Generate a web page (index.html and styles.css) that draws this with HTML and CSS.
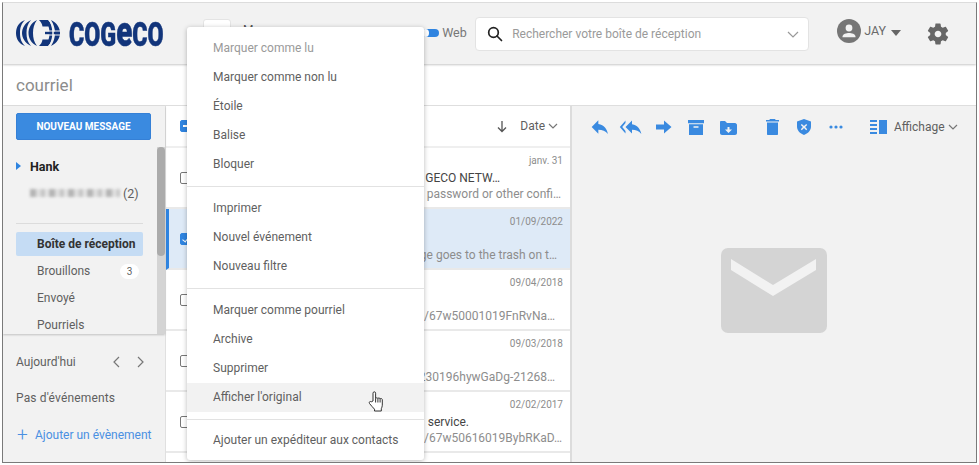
FILE: index.html
```html
<!DOCTYPE html>
<html lang="fr">
<head>
<meta charset="utf-8">
<title>Cogeco courriel</title>
<link rel="stylesheet" href="styles.css">
</head>
<body>
<div class="frame">
  <header class="topbar">
    <div class="logo">
      <svg class="logo-mark" viewBox="0 0 44 26" width="44" height="26">
        <path d="M9 0C3 2 0 7 0 13s3 11 9 13C5 22 4 18 4 13S5 4 9 0Z"/>
        <path d="M15 0C9 3 6 8 6 13s3 10 9 13c-3.500-4-4.500-8-4.500-13S11.500 4 15 0Z"/>
        <path d="M21 0c-6 3-8.500 8-8.500 13S15 23 21 26c-3-4-4-8-4-13S18 4 21 0Z"/>
        <path d="M23 0h9c3 3 5 8 5 13s-2 10-5 13h-9c2-2 3-3.500 3.500-6.500h6c.7-2 1-4 1-6.500s-.3-4.500-1-6.500h-6C26 3.500 25 2 23 0Z"/>
        <path d="M35 0c6 3 9 8 9 13s-3 10-9 13c2.500-4 4-8 4-13s-1.500-9-4-13Z"/>
        <path d="M29 11.600h15v2.800H29z"/>
        <path class="logo-slit" d="M29 10.400h15v1.200H29zM29 14.400h15v1.200H29zM32.500 0H34c2.500 3 3.800 8 3.800 13s-1.300 10-3.800 13h-1.500c2.500-3 3.800-8 3.800-13s-1.300-10-3.800-13Z"/>
      </svg>
      <span class="logo-text">COG<span class="logo-e">e</span>CO</span>
    </div>
    <div class="app-stub"></div>
    <span class="app-label">M</span>
    <div class="top-right">
      <span class="toggle"></span>
      <span class="web-label">Web</span>
      <div class="search">
        <svg class="search-icon" viewBox="0 0 16 16" width="16" height="16"><circle cx="6.500" cy="6.500" r="4.800"/><path d="M10 10l4.500 4.500"/></svg>
        <span class="search-text">Rechercher votre boîte de réception</span>
        <svg class="chev chev-search" viewBox="0 0 12 7" width="12" height="7"><path d="M1 1l5 5 5-5"/></svg>
      </div>
      <div class="avatar">
        <svg viewBox="0 0 24 24" width="24" height="24"><circle cx="12" cy="9" r="3.400"/><path d="M5.500 17.500c0-2.500 4-3.600 6.500-3.600s6.500 1.100 6.500 3.600v.7h-13z"/></svg>
      </div>
      <span class="user-name">JAY</span>
      <span class="caret"></span>
      <svg class="gear" viewBox="0 0 24 24" width="26" height="26"><path d="M19.140 12.940c.04-.3.06-.61.06-.94 0-.32-.02-.64-.07-.94l2.030-1.580a.49.49 0 0 0 .12-.61l-1.920-3.320a.488.488 0 0 0-.59-.22l-2.390.96c-.5-.38-1.030-.7-1.620-.94l-.36-2.540a.484.484 0 0 0-.48-.41h-3.840c-.24 0-.43.17-.47.41l-.36 2.540c-.59.24-1.130.57-1.620.94l-2.390-.96c-.22-.08-.47 0-.59.22L2.740 8.870c-.12.21-.08.47.12.61l2.030 1.580c-.05.3-.09.63-.09.94s.02.64.07.94l-2.030 1.580a.49.49 0 0 0-.12.61l1.920 3.320c.12.22.37.29.59.22l2.390-.96c.5.38 1.030.7 1.620.94l.36 2.540c.05.24.24.41.48.41h3.840c.24 0 .44-.17.47-.41l.36-2.540c.59-.24 1.130-.56 1.620-.94l2.390.96c.22.08.47 0 .59-.22l1.920-3.320c.12-.22.07-.47-.12-.61l-2.010-1.580zM12 15.100c-1.700 0-3.100-1.400-3.100-3.100s1.400-3.100 3.100-3.100 3.100 1.400 3.100 3.100-1.400 3.100-3.100 3.100z"/></svg>
    </div>
  </header>

  <div class="subbar">courriel</div>

  <div class="main">
    <aside class="sidebar">
      <div class="side-top">
        <button class="compose">NOUVEAU MESSAGE</button>
        <div class="account"><span class="tri"></span><span>Hank</span></div>
        <div class="address"><span class="blurred"></span><span>(2)</span></div>
        <div class="side-rule"></div>
        <nav class="folders">
          <div class="folder folder-active">Boîte de réception</div>
          <div class="folder">Brouillons<span class="pill">3</span></div>
          <div class="folder">Envoyé</div>
          <div class="folder">Pourriels</div>
        </nav>
        <div class="scroll-track"><div class="scroll-thumb"></div></div>
      </div>
      <div class="side-bottom">
        <div class="cal-head">
          <span class="cal-today">Aujourd'hui</span>
          <svg class="chev cal-prev" viewBox="0 0 7 12" width="7" height="12"><path d="M6 1L1 6l5 5"/></svg>
          <svg class="chev cal-next" viewBox="0 0 7 12" width="7" height="12"><path d="M1 1l5 5-5 5"/></svg>
        </div>
        <div class="cal-empty">Pas d'événements</div>
        <div class="cal-add"><span class="plus">+</span>Ajouter un évènement</div>
      </div>
    </aside>

    <section class="list">
      <div class="list-head">
        <span class="check check-on check-dash"></span>
        <svg class="sort-arrow" viewBox="0 0 12 13" width="12" height="13"><path d="M6 1v10M2 7.500l4 4 4-4"/></svg>
        <span class="sort-label">Date</span>
        <svg class="chev chev-date" viewBox="0 0 10 6" width="10" height="6"><path d="M1 1l4 4 4-4"/></svg>
      </div>
      <div class="row">
        <span class="check"></span>
        <div class="row-body">
          <div class="r-date">janv. 31</div>
          <div class="r-subj subj-a">GECO NETW…</div>
          <div class="r-prev prev-a">password or other confi…</div>
        </div>
      </div>
      <div class="row row-selected">
        <span class="check check-on check-tick"></span>
        <div class="row-body">
          <div class="r-date">01/09/2022</div>
          <div class="r-subj">&nbsp;</div>
          <div class="r-prev prev-b">ge goes to the trash on t…</div>
        </div>
      </div>
      <div class="row">
        <span class="check"></span>
        <div class="row-body">
          <div class="r-date">09/04/2018</div>
          <div class="r-subj">&nbsp;</div>
          <div class="r-prev prev-c">/67w50001019FnRvNa…</div>
        </div>
      </div>
      <div class="row">
        <span class="check"></span>
        <div class="row-body">
          <div class="r-date">09/03/2018</div>
          <div class="r-subj">&nbsp;</div>
          <div class="r-prev prev-c">230196hywGaDg-21268…</div>
        </div>
      </div>
      <div class="row">
        <span class="check"></span>
        <div class="row-body">
          <div class="r-date">02/02/2017</div>
          <div class="r-subj subj-e">service.</div>
          <div class="r-prev prev-e">/67w50616019BybRKaD…</div>
        </div>
      </div>
    </section>

    <section class="pane">
      <div class="pane-tools">
        <span class="tool"><svg viewBox="0 0 24 24" width="20" height="20"><path d="M10 8.500V4l-8 8 8 8v-4.600c5 0 8.500 1.600 11.500 5.100C20.500 15 17 9.500 10 8.500z"/></svg></span>
        <span class="tool"><svg viewBox="0 0 32 24" width="26" height="20"><path d="M8 7V4L1 12l7 8v-3l-4-5zM16 8.500V4l-8 8 8 8v-4.600c5 0 8.500 1.600 11.500 5.100C26.500 15 23 9.500 16 8.500z"/></svg></span>
        <span class="tool"><svg viewBox="0 0 16 14" width="16" height="14"><path d="M0 4.500h8V0.500L15.500 7 8 13.500v-4H0z"/></svg></span>
        <span class="tool"><svg viewBox="0 0 16 15" width="16" height="15"><path d="M0 0h16v3.300H0zM1 4.300h14V15H1zM5.500 6.300v1.500h5V6.300z" fill-rule="evenodd"/></svg></span>
        <span class="tool"><svg viewBox="0 0 17 15" width="17" height="15"><path d="M1 1h4l2 2h8c1 0 2 1 2 2v8c0 1-1 2-2 2H2c-1 0-2-1-2-2V2c0-.5.500-1 1-1zM7.500 7v2.500H5l3.500 3.500L12 9.500H9.500V7z" fill-rule="evenodd"/></svg></span>
        <span class="tool tool-gap"><svg viewBox="0 0 13 16" width="13" height="16"><path d="M4 0h5l.7 1H13v1.500H0V1h3.300zM1 3.500h11V15c0 .6-.4 1-1 1H2c-.6 0-1-.4-1-1z"/></svg></span>
        <span class="tool"><svg viewBox="0 0 14 16" width="14" height="16"><path d="M7 0l7 2.500v5c0 4-3 7-7 8.500-4-1.500-7-4.500-7-8.500v-5zM4.800 5L7 7.100 9.200 5l1 1L8.100 8.100l2.100 2.100-1 1L7 9.100l-2.200 2.100-1-1 2.100-2.100L3.800 6z" fill-rule="evenodd"/></svg></span>
        <span class="tool"><svg viewBox="0 0 14 4" width="14" height="4"><circle cx="2" cy="2" r="1.600"/><circle cx="7" cy="2" r="1.600"/><circle cx="12" cy="2" r="1.600"/></svg></span>
        <span class="view-icon"><svg viewBox="0 0 17 14" width="17" height="14"><path d="M0 0h7v2H0zM0 4h7v2H0zM0 8h7v2H0zM0 12h7v2H0zM9 0h8v14H9z"/></svg></span>
        <span class="view-label">Affichage</span>
        <svg class="chev chev-view" viewBox="0 0 10 6" width="10" height="6"><path d="M1 1l4 4 4-4"/></svg>
      </div>
      <div class="pane-empty">
        <div class="envelope">
          <svg viewBox="0 0 106 85" width="106" height="85"><path d="M10 11l42 26 43-26v11L52 48 10 22z"/></svg>
        </div>
      </div>
    </section>
  </div>

  <div class="menu">
    <div class="m-item m-disabled">Marquer comme lu</div>
    <div class="m-item">Marquer comme non lu</div>
    <div class="m-item">Étoile</div>
    <div class="m-item">Balise</div>
    <div class="m-item">Bloquer</div>
    <div class="m-sep"></div>
    <div class="m-item">Imprimer</div>
    <div class="m-item">Nouvel événement</div>
    <div class="m-item">Nouveau filtre</div>
    <div class="m-sep"></div>
    <div class="m-item">Marquer comme pourriel</div>
    <div class="m-item">Archive</div>
    <div class="m-item">Supprimer</div>
    <div class="m-item m-hover">Afficher l'original
      <svg class="hand" viewBox="0 0 16 21" width="16" height="21"><path d="M5 10V2.200C5 1.300 5.600.8 6.300.8s1.300.5 1.300 1.400V7.500c0-.9 2.300-.9 2.300.2 0-1 2.200-.9 2.200.3 0-.8 2.200-.7 2.200.7v5.500c0 1.500-.6 2.500-1 3.500v2.300H6.500v-1.800C5 16.500 3 14.500 1.500 12.500c-.8-1.200.4-2.700 1.800-1.700z"/><path d="M7.600 7.500v4M9.900 7.700v3.800M12.100 8v3.500"/></svg>
    </div>
    <div class="m-sep m-sep-last"></div>
    <div class="m-item">Ajouter un expéditeur aux contacts</div>
  </div>
</div>
</body>
</html>
```

FILE: styles.css
```css
* { box-sizing: border-box; }
html, body { margin: 0; padding: 0; background: #fff; }
body { font-family: Roboto, "Liberation Sans", sans-serif; font-size: 12px; color: #5f5f5f; }

.frame {
  position: relative;
  display: flex;
  flex-direction: column;
  width: 975px;
  height: 461px;
  margin: 2px 0 0 2px;
  border: 1px solid #7a7a7a;
  border-top-color: #dcdcdc;
  overflow: hidden;
  background: #f2f2f2;
}

/* top bar */
.topbar {
  display: flex;
  flex: none;
  height: 61px;
  background: #f2f2f2;
  box-shadow: 0 1px 2px rgba(0,0,0,.22);
  position: relative;
  z-index: 1;
}
.logo { display: flex; flex: none; align-items: center; width: 147px; height: 26px; margin: 17px 0 0 13px; }
.logo-mark { flex: none; fill: #12357b; }
.logo-slit { fill: #f2f2f2; }
.logo-text {
  display: inline-block;
  margin-left: 9px;
  font-weight: 900;
  font-size: 33px;
  line-height: 26px;
  white-space: nowrap;
  color: #12357b;
  -webkit-text-stroke: .5px #12357b;
  transform: scaleX(.705);
  transform-origin: left center;
}
.logo-e { font-size: 42px; line-height: 26px; }
.app-stub { width: 28px; height: 24px; margin: 16px 0 0 40px; background: #fff; border: 1px solid #e4e4e4; border-radius: 3px; }
.app-label { margin: 20px 0 0 12px; font-size: 12px; line-height: 15px; color: #555; }
.top-right { display: flex; margin-left: auto; padding-right: 25px; }
.toggle { position: relative; width: 17px; height: 8px; margin-top: 26px; background: #2f84e0; border-radius: 4px; }
.toggle::before { content: ""; position: absolute; left: 0; top: 0; width: 7px; height: 8px; background: #fff; border-radius: 50%; }
.web-label { width: 26px; margin: 22px 0 0 3px; font-size: 12.5px; line-height: 15px; color: #777; }
.search {
  display: flex;
  align-items: center;
  width: 334px;
  height: 34px;
  margin: 14px 0 0 7px;
  padding: 0 9px 0 11px;
  background: #fff;
  border: 1px solid #e3e3e3;
  border-radius: 4px;
}
.search-icon { flex: none; fill: none; stroke: #222; stroke-width: 1.700; stroke-linecap: round; }
.search-text { margin-left: 9px; font-size: 12px; color: #9a9a9a; }
.chev { fill: none; stroke: #777; stroke-width: 1.200; flex: none; }
.chev-search { margin-left: auto; stroke: #999; }
.avatar { width: 24px; height: 24px; margin: 16px 0 0 28px; border-radius: 50%; background: #767676; }
.avatar svg { display: block; fill: #f2f2f2; }
.user-name { margin: 20px 0 0 3px; font-size: 12.5px; line-height: 15px; color: #6a6a6a; }
.caret { width: 0; height: 0; margin: 27px 0 0 5px; border: 5px solid transparent; border-top: 6px solid #666; border-bottom: 0; }
.gear { margin: 18px 0 0 24px; fill: #666; flex: none; }

/* sub bar */
.subbar {
  flex: none;
  height: 42px;
  padding: 10px 0 0 13px;
  background: #fff;
  border-bottom: 1px solid #dedede;
  font-size: 17px;
  line-height: 22px;
  color: #8c8c8c;
}

/* main columns */
.main { display: flex; flex: 1; min-height: 0; }
.sidebar { display: flex; flex-direction: column; flex: none; width: 163px; border-right: 1px solid #e0e0e0; background: #f2f2f2; }
.side-top { position: relative; flex: none; height: 228px; padding: 7px 0 0 13px; overflow: hidden; box-shadow: 0 1px 2px rgba(0,0,0,.2); }
.compose {
  display: block;
  width: 135px;
  height: 27px;
  padding: 0;
  background: #3a8ae0;
  border: 1px solid #3580d6;
  border-radius: 2px;
  color: #fff;
  font: 700 10px/1 Roboto, sans-serif;
}
.account { display: flex; align-items: center; height: 20px; margin-top: 16px; font-weight: 700; font-size: 12.5px; color: #222; }
.tri { width: 0; height: 0; margin-right: 9px; border-left: 5px solid #2f84e0; border-top: 4.500px solid transparent; border-bottom: 4.500px solid transparent; }
.address { display: flex; align-items: center; height: 20px; margin: 7px 0 0 14px; font-size: 12.5px; }
.blurred {
  width: 90px;
  height: 8px;
  margin-right: 3px;
  background: repeating-linear-gradient(90deg, #b4b4b4 0 6px, #dedede 6px 11px, #c4c4c4 11px 15px, #e6e6e6 15px 19px);
  filter: blur(1.500px);
}
.side-rule { width: 127px; height: 1px; margin-top: 20px; background: #dcdcdc; }
.folders { margin-top: 8px; }
.folder { display: flex; align-items: center; width: 127px; height: 24px; margin-bottom: 3px; padding: 0 4px 0 21px; border-radius: 2px; font-size: 12px; }
.folder-active { background: #c5dcf4; font-weight: 700; color: #333; white-space: nowrap; }
.pill { width: 19px; height: 15px; margin-left: auto; background: #fff; border-radius: 8px; font-size: 10px; line-height: 15px; text-align: center; }
.scroll-track { position: absolute; right: 0; top: 41px; bottom: 0; width: 8px; background: #d4d4d4; }
.scroll-thumb { height: 109px; background: #ababab; border-radius: 4px; }
.side-bottom { flex: 1; padding: 0 0 0 13px; position: relative; }
.cal-head { display: flex; align-items: center; height: 20px; margin-top: 18px; }
.cal-today { width: 97px; }
.cal-next { margin-left: 17px; }
.cal-empty { height: 20px; margin-top: 16px; line-height: 20px; letter-spacing: .15px; }
.cal-add { display: flex; align-items: center; height: 20px; margin-top: 17px; color: #4a90e2; white-space: nowrap; }
.plus { width: 18px; margin-left: 1px; font-size: 19px; font-weight: 300; line-height: 20px; }

/* message list */
.list { flex: none; width: 406px; background: #fff; border-right: 2px solid #dcdcdc; }
.list-head { display: flex; align-items: center; height: 42px; padding: 0 12px 0 14px; border-bottom: 2px solid #efefef; }
.check { position: relative; flex: none; width: 12px; height: 12px; border: 1.500px solid #777; border-radius: 2px; background: #fff; }
.check-on { background: #2f84e0; border-color: #2f84e0; }
.check-dash::after { content: ""; position: absolute; left: 2px; top: 3.500px; width: 6px; height: 2px; background: #fff; }
.check-tick::after { content: ""; position: absolute; left: 3px; top: 1px; width: 3px; height: 6px; border: solid #fff; border-width: 0 1.500px 1.500px 0; transform: rotate(40deg); }
.sort-arrow { margin-left: auto; fill: none; stroke: #555; stroke-width: 1.300; }
.sort-label { margin-left: 12px; font-size: 12px; }
.chev-date { margin-left: 3px; }
.row { display: flex; align-items: center; height: 61px; padding: 0 7px 0 14px; border-bottom: 2px solid #e9e9e9; }
.row-selected { background: #deeaf7; border-left: 3px solid #2f84e0; padding-left: 11px; }
.row-body { flex: 1; min-width: 0; height: 100%; padding-top: 5px; text-align: right; white-space: nowrap; }
.r-date { height: 17px; font-size: 10px; line-height: 16px; color: #8d8d8d; }
.r-subj { height: 16px; font-size: 12px; line-height: 16px; color: #444; }
.r-prev { height: 16px; font-size: 12px; line-height: 16px; color: #8d8d8d; }
.subj-a { padding-right: 63px; }
.subj-e { padding-right: 94px; }
.prev-a { padding-right: 2px; }
.prev-b { padding-right: 6px; }
.prev-c { padding-right: 8px; }
.prev-e { padding-right: 1px; }

/* reading pane */
.pane { display: flex; flex-direction: column; flex: 1; min-width: 0; background: #f2f2f2; }
.pane-tools { display: flex; align-items: center; flex: none; height: 42px; padding-left: 12px; fill: #3a8ae0; }
.tool { display: flex; justify-content: center; width: 32px; }
.tool-gap { margin-left: 12px; }
.view-icon { display: flex; margin-left: 18px; }
.view-label { margin-left: 7px; font-size: 12px; }
.chev-view { margin-left: 3px; }
.pane-empty { display: flex; flex: 1; align-items: center; justify-content: center; padding-bottom: 30px; }
.envelope { width: 106px; height: 85px; background: #d4d4d4; border-radius: 7px; }
.envelope svg { display: block; fill: #f2f2f2; }

/* context menu */
.menu {
  position: absolute;
  left: 184px;
  top: 24px;
  z-index: 5;
  width: 237px;
  height: 433px;
  padding-top: 7px;
  background: #fff;
  border-radius: 3px;
  box-shadow: 0 1px 5px rgba(0,0,0,.28);
}
.m-item { position: relative; height: 29px; padding-left: 26px; font-size: 12px; line-height: 29px; color: #5f5f5f; white-space: nowrap; }
.m-disabled { color: #9a9a9a; }
.m-hover { background: #f2f2f2; }
.m-sep { height: 15px; padding-top: 7px; }
.m-sep-last { height: 14px; }
.m-sep::before { content: ""; display: block; height: 1px; background: #e2e2e2; }
.hand { position: absolute; left: 181px; top: 8px; fill: #fff; stroke: #333; stroke-width: 1; stroke-linejoin: round; }
```
